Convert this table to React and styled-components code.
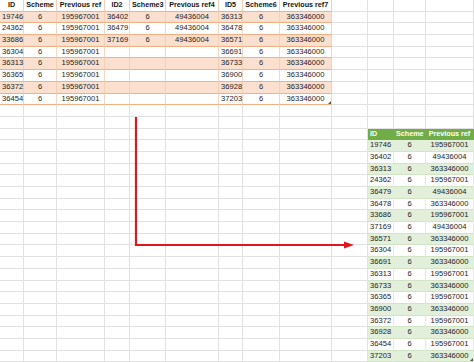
import React from "react";
import styled, { createGlobalStyle, css } from "styled-components";

const GlobalStyle = createGlobalStyle`
  html, body {
    margin: 0;
    padding: 0;
    background: #ffffff;
  }
  #root {
    width: 474px;
    height: 362px;
    overflow: hidden;
  }
`;

const COLS = [24, 33, 48, 25, 36, 53, 24, 37, 52, 36, 26, 32, 48];
const ROW_H = 11.7;
const ROW_COUNT = 31;

const topHeader = [
  "ID",
  "Scheme",
  "Previous ref",
  "ID2",
  "Scheme3",
  "Previous ref4",
  "ID5",
  "Scheme6",
  "Previous ref7",
];

const topRows = [
  ["19746", "6", "195967001", "36402", "6", "49436004", "36313", "6", "363346000"],
  ["24362", "6", "195967001", "36479", "6", "49436004", "36478", "6", "363346000"],
  ["33686", "6", "195967001", "37169", "6", "49436004", "36571", "6", "363346000"],
  ["36304", "6", "195967001", "", "", "", "36691", "6", "363346000"],
  ["36313", "6", "195967001", "", "", "", "36733", "6", "363346000"],
  ["36365", "6", "195967001", "", "", "", "36900", "6", "363346000"],
  ["36372", "6", "195967001", "", "", "", "36928", "6", "363346000"],
  ["36454", "6", "195967001", "", "", "", "37203", "6", "363346000"],
];

const refs = { a: "195967001", b: "49436004", c: "363346000" };
const mergedRows = [
  ["19746", refs.a],
  ["36402", refs.b],
  ["36313", refs.c],
  ["24362", refs.a],
  ["36479", refs.b],
  ["36478", refs.c],
  ["33686", refs.a],
  ["37169", refs.b],
  ["36571", refs.c],
  ["36304", refs.a],
  ["36691", refs.c],
  ["36313", refs.a],
  ["36733", refs.c],
  ["36365", refs.a],
  ["36900", refs.c],
  ["36372", refs.a],
  ["36928", refs.c],
  ["36454", refs.a],
  ["37203", refs.c],
];

const MERGED_TOP = 11;
const MERGED_LEFT = 10;

const Sheet = styled.div`
  position: relative;
  display: grid;
  grid-template-columns: ${COLS.map((w) => `${w}px`).join(" ")};
  grid-auto-rows: ${ROW_H}px;
  font-family: "Liberation Sans", Arial, sans-serif;
  font-size: 7.6px;
  color: #1c1c1c;
`;

const kinds = {
  plain: css`
    background: #ffffff;
    border-right-color: #e1e1e1;
    border-bottom-color: #e1e1e1;
  `,
  topHead: css`
    background: #ffffff;
    font-weight: 700;
    font-size: 7.2px;
    color: #141414;
    border-right-color: #f6cfb4;
    border-bottom-color: #f4b084;
  `,
  topBand: css`
    background: #fbe0d0;
    border-right-color: #f6cfb4;
    border-bottom-color: #f4b084;
  `,
  topBody: css`
    background: #ffffff;
    border-right-color: #f6d6c0;
    border-bottom-color: #f4b084;
  `,
  greenHead: css`
    background: #70ad47;
    color: #ffffff;
    font-weight: 700;
    font-size: 7.2px;
    border-right-color: #70ad47;
    border-bottom-color: #70ad47;
  `,
  greenBand: css`
    background: #e2efda;
    border-right-color: #e2efda;
    border-bottom-color: #d3e4c6;
  `,
  greenBody: css`
    background: #ffffff;
    border-right-color: #e8e8e8;
    border-bottom-color: #d3e4c6;
  `,
};

const Cell = styled.div`
  position: relative;
  box-sizing: border-box;
  border-right: 1px solid transparent;
  border-bottom: 1px solid transparent;
  line-height: ${ROW_H - 1}px;
  padding: 0 2px;
  white-space: nowrap;
  overflow: visible;
  text-align: ${(p) => p.$align || "center"};
  ${(p) => kinds[p.$kind || "plain"]}

  ${(p) =>
    p.$corner &&
    css`
      &::after {
        content: "";
        position: absolute;
        right: 0;
        bottom: 0;
        width: 0;
        height: 0;
        border-left: 3px solid transparent;
        border-bottom: 3px solid #555555;
      }
    `}
`;

const Arrow = styled.svg`
  position: absolute;
  left: 0;
  top: 0;
  width: 474px;
  height: 362px;
  pointer-events: none;
`;

function cellFor(r, c) {
  if (r === 0 && c < 9) {
    return { text: topHeader[c], kind: "topHead", align: "center" };
  }
  if (r >= 1 && r <= 8 && c < 9) {
    const row = topRows[r - 1];
    return {
      text: row[c],
      kind: r % 2 === 1 ? "topBand" : "topBody",
      align: c % 3 === 0 ? "left" : "center",
      corner: r === 8 && c === 8,
    };
  }
  if (r === MERGED_TOP && c >= MERGED_LEFT) {
    const labels = ["ID", "Scheme", "Previous ref"];
    const i = c - MERGED_LEFT;
    return { text: labels[i], kind: "greenHead", align: i === 0 ? "left" : "center" };
  }
  if (r > MERGED_TOP && c >= MERGED_LEFT) {
    const idx = r - MERGED_TOP - 1;
    const item = mergedRows[idx];
    if (!item) return { text: "", kind: "plain" };
    const i = c - MERGED_LEFT;
    const text = i === 0 ? item[0] : i === 1 ? "6" : item[1];
    return {
      text,
      kind: idx % 2 === 0 ? "greenBand" : "greenBody",
      align: i === 0 ? "left" : "center",
      corner: idx === mergedRows.length - 1 && i === 2,
    };
  }
  return { text: "", kind: "plain" };
}

export default function App() {
  const cells = [];
  for (let r = 0; r < ROW_COUNT; r++) {
    for (let c = 0; c < COLS.length; c++) {
      const cell = cellFor(r, c);
      cells.push(
        <Cell key={`${r}-${c}`} $kind={cell.kind} $align={cell.align} $corner={cell.corner}>
          {cell.text}
        </Cell>
      );
    }
  }

  return (
    <>
      <GlobalStyle />
      <Sheet>
        {cells}
        <Arrow viewBox="0 0 474 362">
          <path
            d="M136 117 V245 H346"
            fill="none"
            stroke="#e3161d"
            strokeWidth="2.2"
          />
          <polygon points="344,241.5 354,245 344,248.5" fill="#e3161d" />
        </Arrow>
      </Sheet>
    </>
  );
}
